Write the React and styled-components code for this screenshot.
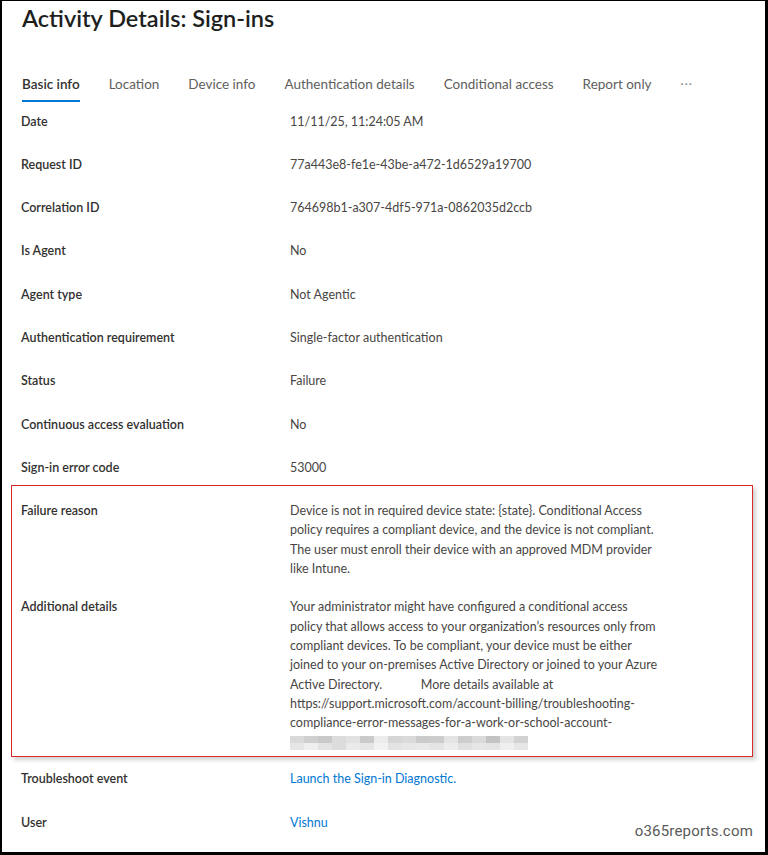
import React from 'react';
import styled, { createGlobalStyle } from 'styled-components';

const GlobalStyle = createGlobalStyle`
  html, body {
    margin: 0;
    padding: 0;
    background: #fff;
  }
  body {
    font-family: Lato, "Open Sans", "Noto Sans", sans-serif;
    -webkit-font-smoothing: antialiased;
  }
`;

const rows = [
  { label: 'Date', value: ['11/11/25, 11:24:05 AM'] },
  { label: 'Request ID', value: ['77a443e8-fe1e-43be-a472-1d6529a19700'] },
  { label: 'Correlation ID', value: ['764698b1-a307-4df5-971a-0862035d2ccb'] },
  { label: 'Is Agent', value: ['No'] },
  { label: 'Agent type', value: ['Not Agentic'] },
  { label: 'Authentication requirement', value: ['Single-factor authentication'] },
  { label: 'Status', value: ['Failure'] },
  { label: 'Continuous access evaluation', value: ['No'] },
  { label: 'Sign-in error code', value: ['53000'] },
];

const highlighted = [
  {
    label: 'Failure reason',
    value: [
      'Device is not in required device state: {state}. Conditional Access',
      'policy requires a compliant device, and the device is not compliant.',
      'The user must enroll their device with an approved MDM provider',
      'like Intune.',
    ],
  },
  {
    label: 'Additional details',
    value: [
      'Your administrator might have configured a conditional access',
      'policy that allows access to your organization\u2019s resources only from',
      'compliant devices. To be compliant, your device must be either',
      'joined to your on-premises Active Directory or joined to your Azure',
      'Active Directory.\u00a0\u00a0\u00a0\u00a0\u00a0\u00a0\u00a0\u00a0\u00a0\u00a0\u00a0\u00a0More details available at',
      'https://support.microsoft.com/account-billing/troubleshooting-',
      'compliance-error-messages-for-a-work-or-school-account-',
    ],
    redacted: true,
  },
];

const tabs = ['Basic info', 'Location', 'Device info', 'Authentication details', 'Conditional access', 'Report only'];

// pixelated strip hiding the tail of the support URL
const mosaicTop = ['#d9d9d9', '#cfcfcf', '#c9c9c9', '#dcdcdc', '#e2e2e2', '#cacaca', '#ececec', '#d6d6d6', '#dadada', '#cbcbcb', '#cdcdcd', '#e4e4e4', '#cdcdcd', '#dadada', '#c3c3c3', '#e4e4e4', '#d2d2d2'];
const mosaicBottom = ['#e6e6e6', '#eeeeee', '#e3e3e3', '#dcdcdc', '#eaeaea', '#e6e6e6', '#f2f2f2', '#e3e3e3', '#e7e7e7', '#e9e9e9', '#e4e4e4', '#ececec', '#e0e0e0', '#e6e6e6', '#e4e4e4', '#eeeeee', '#e6e6e6'];

const Frame = styled.div`
  position: relative;
  box-sizing: border-box;
  width: 768px;
  height: 855px;
  border-style: solid;
  border-color: #000;
  border-width: 1px 3px 3px 2px;
  overflow: hidden;
  color: #323130;
`;

const Title = styled.h1`
  margin: 0;
  padding: 0 0 0 20px;
  font-size: 23.5px;
  line-height: 34px;
  font-weight: 600;
  color: #201f1e;
`;

const TabBar = styled.div`
  display: flex;
  align-items: flex-end;
  gap: 29px;
  margin-top: 39px;
  padding-left: 20px;
`;

const Tab = styled.div`
  font-size: 13.5px;
  line-height: 20px;
  padding-bottom: 6px;
  color: ${(p) => (p.$active ? '#323130' : '#605e5c')};
  font-weight: ${(p) => (p.$active ? 600 : 400)};
  border-bottom: 2px solid ${(p) => (p.$active ? '#0078d4' : 'transparent')};
`;

const More = styled.div`
  font-size: 12px;
  line-height: 20px;
  padding-bottom: 8px;
  color: #8a8886;
  letter-spacing: 1px;
`;

const List = styled.div`
  display: flex;
  flex-direction: column;
`;

const Row = styled.div`
  display: flex;
  align-items: flex-start;
  box-sizing: border-box;
  min-height: 43.3px;
  padding: 9.5px 0 9.5px 19px;
  font-size: 12.5px;
  line-height: 19.3px;
`;

const Label = styled.div`
  flex: 0 0 269px;
  font-weight: 600;
  color: #323130;
`;

const Value = styled.div`
  flex: 1;
  color: #484644;
`;

const Line = styled.div`
  white-space: nowrap;
`;

const Link = styled.a`
  color: #0078d4;
  text-decoration: none;
`;

const Highlight = styled.div`
  position: relative;
  display: flex;
  flex-direction: column;

  &::after {
    content: '';
    position: absolute;
    top: -7px;
    bottom: 3px;
    left: 9px;
    right: 12px;
    border: 1.5px solid #d42a2a;
    box-shadow: 3px 3px 4px rgba(0, 0, 0, 0.18);
    pointer-events: none;
  }
`;

const Mosaic = styled.div`
  display: grid;
  grid-template-columns: repeat(17, 14px);
  grid-auto-rows: 7px;
  margin-top: 4px;
  width: 236px;
`;

const Cell = styled.span`
  background: ${(p) => p.$shade};
`;

const Watermark = styled.div`
  position: absolute;
  right: 12px;
  bottom: 12px;
  font-family: Roboto, "Liberation Sans", sans-serif;
  font-size: 15px;
  color: #5a5a5a;
  letter-spacing: 0.2px;
`;

function DetailRow({ label, value, redacted }) {
  return (
    <Row>
      <Label>{label}</Label>
      <Value>
        {value.map((line, i) => (
          <Line key={i}>{line}</Line>
        ))}
        {redacted && (
          <Mosaic>
            {mosaicTop.concat(mosaicBottom).map((c, i) => (
              <Cell key={i} $shade={c} />
            ))}
          </Mosaic>
        )}
      </Value>
    </Row>
  );
}

export default function App() {
  return (
    <>
      <GlobalStyle />
      <Frame>
        <Title>Activity Details: Sign-ins</Title>
        <TabBar>
          {tabs.map((t, i) => (
            <Tab key={t} $active={i === 0}>
              {t}
            </Tab>
          ))}
          <More>···</More>
        </TabBar>
        <List>
          {rows.map((r) => (
            <DetailRow key={r.label} {...r} />
          ))}
          <Highlight>
            {highlighted.map((r) => (
              <DetailRow key={r.label} {...r} />
            ))}
          </Highlight>
          <Row>
            <Label>Troubleshoot event</Label>
            <Value>
              <Link href="#">Launch the Sign-in Diagnostic.</Link>
            </Value>
          </Row>
          <Row>
            <Label>User</Label>
            <Value>
              <Link href="#">Vishnu</Link>
            </Value>
          </Row>
        </List>
        <Watermark>o365reports.com</Watermark>
      </Frame>
    </>
  );
}
